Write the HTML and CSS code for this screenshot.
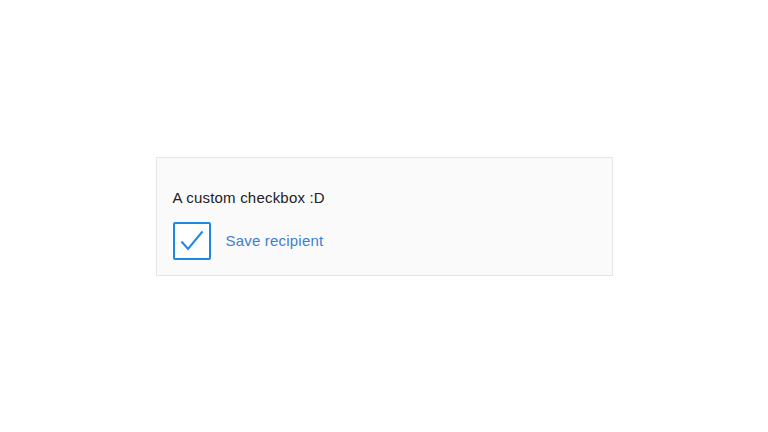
FILE: index.html
```html
<html>
<head>
<link rel="stylesheet" href="styles.css">
</head>
<body>
<div class="page">
  <div class="card">
    <div class="title">A custom checkbox :D</div>
    <label class="check">
      <input type="checkbox" checked>
      <span class="box">
        <svg width="38" height="38" viewBox="0 0 38 38">
          <polyline points="8.5,19.5 15,27 29.5,9.5" fill="none" stroke="#1e88e5" stroke-width="2"/>
        </svg>
      </span>
      <span class="text">Save recipient</span>
    </label>
  </div>
</div>
</body>
</html>
```
FILE: styles.css
```css
body {
  margin: 0;
  padding: 0;
  background: #fff;
  font-family: "Liberation Sans", Arial, sans-serif;
  font-size: 15px;
  letter-spacing: 0.2px;
}

.page {
  height: 432px;
  display: flex;
  align-items: center;
  justify-content: center;
}

.card {
  width: 423px;
  padding: 31px 16px 15px 16px;
  background: #fafafa;
  border: 1px solid #e6e6e6;
}

.title {
  color: #222;
  margin-bottom: 16px;
}

.check {
  display: flex;
  align-items: center;
  cursor: pointer;
}

.check input {
  display: none;
}

.box {
  width: 34px;
  height: 34px;
  border: 2px solid #1e88e5;
  border-radius: 2px;
  background: #fff;
  position: relative;
}

.box svg {
  position: absolute;
  top: -2px;
  left: -2px;
}

.text {
  margin-left: 15px;
  color: #3a80d2;
}
```
